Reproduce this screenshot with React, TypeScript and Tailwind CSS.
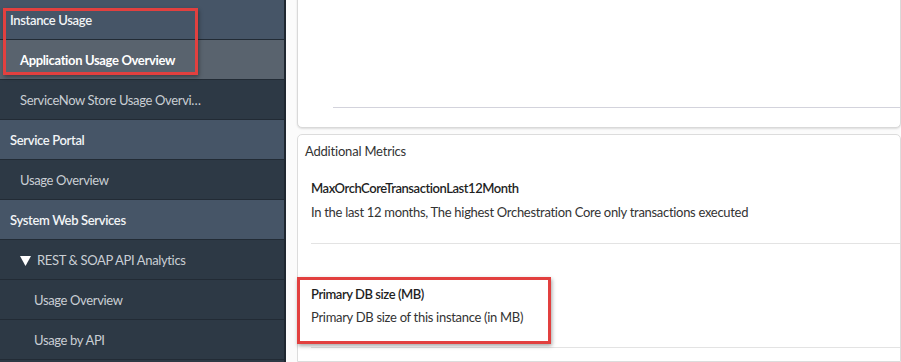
import { ReactNode } from "react";

type NavRow = {
  label: string;
  kind: "header" | "active" | "item";
  indent: number;
  caret?: boolean;
};

const rows: NavRow[] = [
  { label: "Instance Usage", kind: "header", indent: 10 },
  { label: "Application Usage Overview", kind: "active", indent: 20 },
  { label: "ServiceNow Store Usage Overvi…", kind: "item", indent: 20 },
  { label: "Service Portal", kind: "header", indent: 10 },
  { label: "Usage Overview", kind: "item", indent: 20 },
  { label: "System Web Services", kind: "header", indent: 10 },
  { label: "REST & SOAP API Analytics", kind: "item", indent: 20, caret: true },
  { label: "Usage Overview", kind: "item", indent: 34 },
  { label: "Usage by API", kind: "item", indent: 34 },
];

function Row({ row }: { row: NavRow }) {
  const bg =
    row.kind === "header"
      ? "bg-[#465567] text-[#f2f4f6] font-semibold"
      : row.kind === "active"
        ? "bg-[#59636e] text-white font-bold"
        : "bg-[#2d3945] text-[#c9ced4]";
  return (
    <div
      className={`h-10 shrink-0 flex items-center pt-[2px] border-b border-[#222b35] text-[13px] tracking-[-0.35px] ${bg}`}
      style={{ paddingLeft: row.indent }}
    >
      {row.caret && (
        <svg width="11" height="10" viewBox="0 0 11 10" className="mr-[6px] shrink-0">
          <path d="M0 0 H11 L5.5 10 Z" fill="#ffffff" />
        </svg>
      )}
      {row.label}
    </div>
  );
}

function Callout({ children, className }: { children: ReactNode; className: string }) {
  return (
    <div
      className={`absolute border-[3px] border-[#e2403f] shadow-[1px_2px_4px_rgba(0,0,0,0.35)] pointer-events-none ${className}`}
    >
      {children}
    </div>
  );
}

export default function App() {
  return (
    <div
      className="relative w-[901px] h-[362px] overflow-hidden bg-white flex"
      style={{ fontFamily: "Lato, 'Open Sans', sans-serif" }}
    >
      {/* SIDEBAR */}
      <div className="w-[286px] shrink-0 flex flex-col border-r-2 border-[#1f2730] bg-[#2d3945]">
        {rows.map((r, i) => (
          <Row key={i} row={r} />
        ))}
      </div>

      {/* CONTENT */}
      <div className="flex-1 flex flex-col bg-[#fbfbfb] pl-[11px]">
        <div className="h-[136px] shrink-0 -mt-2 bg-white border border-[#d9d9d9] rounded-[5px] shadow-[0_1px_2px_rgba(0,0,0,0.12)] flex flex-col justify-end pb-[19px]">
          <div className="ml-[35px] border-t border-[#d3d3dc]" />
        </div>

        <div className="mt-[6px] flex-1 bg-white border border-[#dcdcdc] rounded-t-[5px] text-[#2e2e2e]">
          <div className="px-[7px] pt-[7px] text-[13px] tracking-[-0.2px] text-[#333]">Additional Metrics</div>

          <div className="pl-[13px] mt-[17px]">
            <div className="text-[13px] font-semibold tracking-[-0.45px] text-[#1f1f1f]">
              MaxOrchCoreTransactionLast12Month
            </div>
            <div className="mt-[5px] text-[13px] tracking-[-0.3px] text-[#333]">
              In the last 12 months, The highest Orchestration Core only transactions executed
            </div>
            <div className="mt-[20px] border-t border-[#e3e3e3]" />

            <div className="mt-[41px] text-[13px] font-semibold tracking-[-0.45px] text-[#1f1f1f]">
              Primary DB size (MB)
            </div>
            <div className="mt-[4px] text-[13px] tracking-[-0.3px] text-[#333]">
              Primary DB size of this instance (in MB)
            </div>
            <div className="mt-[19px] border-t border-[#e3e3e3]" />
          </div>
        </div>
      </div>

      <Callout className="left-[3px] top-[8px] w-[195px] h-[67px]">{null}</Callout>
      <Callout className="left-[297px] top-[277px] w-[254px] h-[67px]">{null}</Callout>
    </div>
  );
}
